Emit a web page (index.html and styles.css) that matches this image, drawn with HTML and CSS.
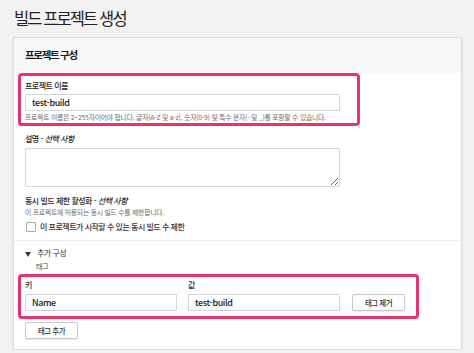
FILE: index.html
```html
<!DOCTYPE html>
<html lang="ko">

<head>
    <meta charset="UTF-8">
    <meta name="viewport" content="width=device-width, initial-scale=1.0">
    <title>빌드 프로젝트 생성</title>
    <link rel="stylesheet" href="styles.css">
</head>

<body>

    <h1 class="page-title">빌드 프로젝트 생성</h1>

    <div class="card">
        <div class="card-header">프로젝트 구성</div>

        <div class="card-body">
            <div class="highlight name-box">
                <label class="field-label" for="projectName">프로젝트 이름</label>
                <input class="text-input" id="projectName" type="text" value="test-build">
                <p class="hint">프로젝트 이름은 2~255자이어야 합니다. 글자(A-Z 및 a-z), 숫자(0-9) 및 특수 문자(- 및 _)를 포함할 수 있습니다.</p>
            </div>

            <div class="section">
                <label class="field-label desc-label" for="description">설명 - <em>선택 사항</em></label>
                <textarea class="text-area" id="description"></textarea>

                <div class="field-label limit-label">동시 빌드 제한 활성화 - <em>선택 사항</em></div>
                <p class="hint hint-tight">이 프로젝트에 허용되는 동시 빌드 수를 제한합니다.</p>
                <label class="check-row">
                    <span class="check-box"></span>
                    이 프로젝트가 시작할 수 있는 동시 빌드 수 제한
                </label>
            </div>

            <div class="section extra">
                <div class="toggle"><span class="caret">▼</span>추가 구성</div>
                <div class="sub-label">태그</div>
            </div>

            <div class="highlight tag-box">
                <div class="tag-col">
                    <div class="field-label small">키</div>
                    <input class="text-input" type="text" value="Name">
                </div>
                <div class="tag-col">
                    <div class="field-label small">값</div>
                    <input class="text-input" type="text" value="test-build">
                </div>
                <button class="btn remove-btn">태그 제거</button>
            </div>

            <div class="section">
                <button class="btn add-btn">태그 추가</button>
            </div>
        </div>
    </div>

</body>

</html>
```

FILE: styles.css
```css
body {
    font-family: 'Noto Sans CJK KR', 'Noto Sans', sans-serif;
    margin: 0;
    padding: 6px 0 0 13px;
    background-color: #f2f2f2;
    color: #333;
    overflow: hidden;
}

.page-title {
    font-size: 16.5px;
    font-weight: 400;
    letter-spacing: -1.9px;
    line-height: 24px;
    margin: 0 0 7px 1px;
    color: #222;
}

.card {
    width: 447px;
    background-color: #fff;
    border: 1px solid #dcdcdc;
    box-shadow: 0 1px 2px rgba(0, 0, 0, 0.12);
}

.card-header {
    height: 35px;
    line-height: 33px;
    padding-left: 11px;
    background-color: #f8f8f8;
    font-size: 10.5px;
    font-weight: 700;
    letter-spacing: -1.3px;
    color: #1a1a1a;
}

.card-body {
    padding-bottom: 10px;
}

.highlight {
    margin-left: 4px;
    border: 3px solid #e9326e;
    border-radius: 4px;
    box-sizing: border-box;
}

.name-box {
    width: 342px;
    padding: 3px 0 0 4px;
}

.section {
    padding-left: 11px;
}

.field-label {
    display: block;
    font-size: 8px;
    font-weight: 500;
    letter-spacing: -0.5px;
    line-height: 14px;
    color: #262626;
}

.field-label em {
    font-style: italic;
}

.text-input {
    display: block;
    width: 315px;
    height: 17px;
    box-sizing: border-box;
    margin: 1px 0 0;
    padding: 0 6px;
    border: 1px solid #d5d5d5;
    border-radius: 1px;
    font-family: inherit;
    font-size: 9px;
    font-weight: 500;
    letter-spacing: -0.4px;
    color: #1a1a1a;
}

.hint {
    margin: 0;
    font-size: 6.8px;
    letter-spacing: -0.2px;
    line-height: 12px;
    color: #6b6b6b;
    white-space: nowrap;
}

.desc-label {
    margin-top: 6px;
}

.text-area {
    display: block;
    width: 315px;
    height: 39px;
    box-sizing: border-box;
    margin: 2px 0 0;
    border: 1px solid #d5d5d5;
    border-radius: 1px;
}

.limit-label {
    margin-top: 7px;
}

.hint-tight {
    line-height: 11px;
    margin-top: -1px;
}

.check-row {
    display: flex;
    align-items: center;
    gap: 4px;
    height: 15px;
    margin-top: 1px;
    font-size: 8px;
    font-weight: 500;
    letter-spacing: -0.5px;
    color: #333;
}

.check-box {
    width: 8px;
    height: 8px;
    margin-left: 1px;
    border: 1px solid #aaa;
    border-radius: 1px;
}

.extra {
    margin-top: 6px;
    padding-top: 5px;
    border-top: 1px solid #eeeeee;
}

.toggle {
    font-size: 8px;
    letter-spacing: -0.5px;
    line-height: 14px;
    color: #333;
}

.caret {
    display: inline-block;
    width: 12px;
    font-size: 6px;
    letter-spacing: 0;
}

.sub-label {
    padding-left: 11px;
    font-size: 7px;
    letter-spacing: -0.3px;
    line-height: 11px;
    color: #444;
}

.tag-box {
    display: flex;
    align-items: flex-end;
    gap: 11px;
    width: 401px;
    margin-top: 2px;
    padding: 2px 0 5px 4px;
}

.tag-col {
    width: 152px;
}

.tag-col .text-input {
    width: 152px;
    margin-top: 3px;
}

.small {
    font-size: 8px;
    line-height: 12px;
}

.btn {
    display: block;
    height: 17px;
    padding: 0;
    border: 1px solid #c8c8c8;
    border-radius: 2px;
    background-color: #fff;
    font-family: inherit;
    font-size: 7.5px;
    font-weight: 500;
    letter-spacing: -0.5px;
    color: #333;
    box-shadow: 0 1px 1px rgba(0, 0, 0, 0.08);
}

.remove-btn {
    width: 53px;
    margin-left: 1px;
}

.add-btn {
    width: 53px;
    margin-top: 3px;
}
```
